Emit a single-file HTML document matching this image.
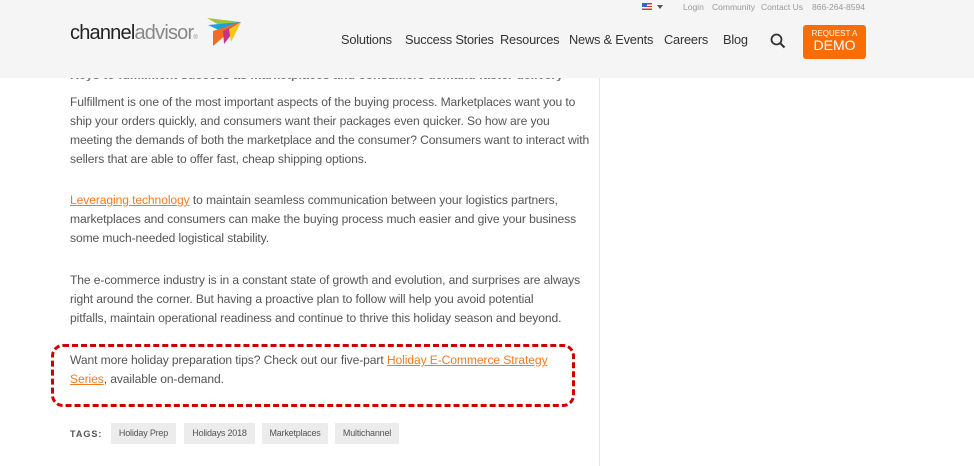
<!DOCTYPE html>
<html><head><style>
*{margin:0;padding:0;box-sizing:border-box}
body{width:974px;height:466px;overflow:hidden;background:#fff;font-family:"Liberation Sans",sans-serif;position:relative;color:#555}
.hdr{position:absolute;left:0;top:0;width:974px;height:78px;background:#f5f5f5}
.vl{position:absolute;left:599px;top:78px;width:1px;height:388px;background:#e4e4e4}
p.t{position:absolute;left:70px;width:530px;font-size:12.1px;line-height:19px;color:#555;letter-spacing:-0.1px;white-space:nowrap}
a{color:#f47b20;text-decoration:underline}
.nav{position:absolute;top:32px;font-size:12.8px;color:#333;letter-spacing:-0.2px}
.top{position:absolute;top:2px;font-size:8.5px;color:#999}
.tag{position:absolute;top:423px;height:21px;background:#ececec;font-size:9px;color:#555;line-height:21px;text-align:center;letter-spacing:-0.2px}
</style></head><body>
<div class="hdr">
<div style="position:absolute;left:70px;top:22px;font-size:20px;letter-spacing:-0.8px;color:#222">channel<span style="color:#888">advisor</span><span style="font-size:6px;color:#888">®</span></div>
<svg style="position:absolute;left:207px;top:17px" width="36" height="30" viewBox="0 0 36 30">
<polygon points="0,1 34,5 12,8" fill="#a6c13a"/>
<polygon points="1,8 34,5 16,15" fill="#1ea0d8"/>
<polygon points="6,14 34,5 6,29" fill="#f26c1f"/>
<polygon points="16,14 34,5 17,27" fill="#c8308c"/>
<polygon points="22,12 34,5 24,25" fill="#f6c515"/>
</svg>
<div style="position:absolute;left:642px;top:3px;width:10px;height:7px;background:linear-gradient(#d33 0 20%,#fff 20% 40%,#d33 40% 60%,#fff 60% 80%,#d33 80%)"><div style="width:5px;height:4px;background:#36c"></div></div>
<div style="position:absolute;left:657px;top:5px;border:3px solid transparent;border-top:4px solid #555"></div>
<div class="top" style="left:683px">Login</div>
<div class="top" style="left:712px">Community</div>
<div class="top" style="left:761px">Contact Us</div>
<div class="top" style="left:812px">866-264-8594</div>
<div class="nav" style="left:341px">Solutions</div>
<div class="nav" style="left:405px">Success Stories</div>
<div class="nav" style="left:500px">Resources</div>
<div class="nav" style="left:569px">News &amp; Events</div>
<div class="nav" style="left:664px">Careers</div>
<div class="nav" style="left:723px">Blog</div>
<svg style="position:absolute;left:770px;top:33px" width="16" height="16" viewBox="0 0 16 16"><circle cx="6.5" cy="6.5" r="5" fill="none" stroke="#333" stroke-width="1.8"/><line x1="10" y1="10" x2="14.5" y2="14.5" stroke="#333" stroke-width="2"/></svg>
<div style="position:absolute;left:803px;top:25px;width:63px;height:34px;background:#fa6d05;border-radius:3px;color:#fff;text-align:center">
<div style="font-size:8px;margin-top:4px">REQUEST A</div><div style="font-size:14px;line-height:15px">DEMO</div></div>
</div>
<div style="position:absolute;left:70px;top:78px;width:510px;height:3px;overflow:hidden"><div style="margin-top:-10px;font-size:12.4px;font-weight:bold;color:#777;white-space:nowrap">Keys to fulfillment success as marketplaces and consumers demand faster delivery</div></div>
<div class="vl"></div>
<p class="t" style="top:93px">Fulfillment is one of the most important aspects of the buying process. Marketplaces want you to<br>ship your orders quickly, and consumers want their packages even quicker. So how are you<br>meeting the demands of both the marketplace and the consumer? Consumers want to interact with<br>sellers that are able to offer fast, cheap shipping options.</p>
<p class="t" style="top:191px"><a>Leveraging technology</a> to maintain seamless communication between your logistics partners,<br>marketplaces and consumers can make the buying process much easier and give your business<br>some much-needed logistical stability.</p>
<p class="t" style="top:271px">The e-commerce industry is in a constant state of growth and evolution, and surprises are always<br>right around the corner. But having a proactive plan to follow will help you avoid potential<br>pitfalls, maintain operational readiness and continue to thrive this holiday season and beyond.</p>
<div style="position:absolute;left:51px;top:344px;width:524px;height:63px;border:3px dashed #c00;border-radius:12px"></div>
<p class="t" style="top:351px">Want more holiday preparation tips? Check out our five-part <a>Holiday E-Commerce Strategy</a><br><a>Series</a>, available on-demand.</p>
<div style="position:absolute;left:70px;top:429px;font-size:9px;font-weight:bold;color:#555;letter-spacing:1px">TAGS:</div>
<div class="tag" style="left:111px;width:65px">Holiday Prep</div>
<div class="tag" style="left:184px;width:71px">Holidays 2018</div>
<div class="tag" style="left:262px;width:66px">Marketplaces</div>
<div class="tag" style="left:335px;width:64px">Multichannel</div>
</body></html>
